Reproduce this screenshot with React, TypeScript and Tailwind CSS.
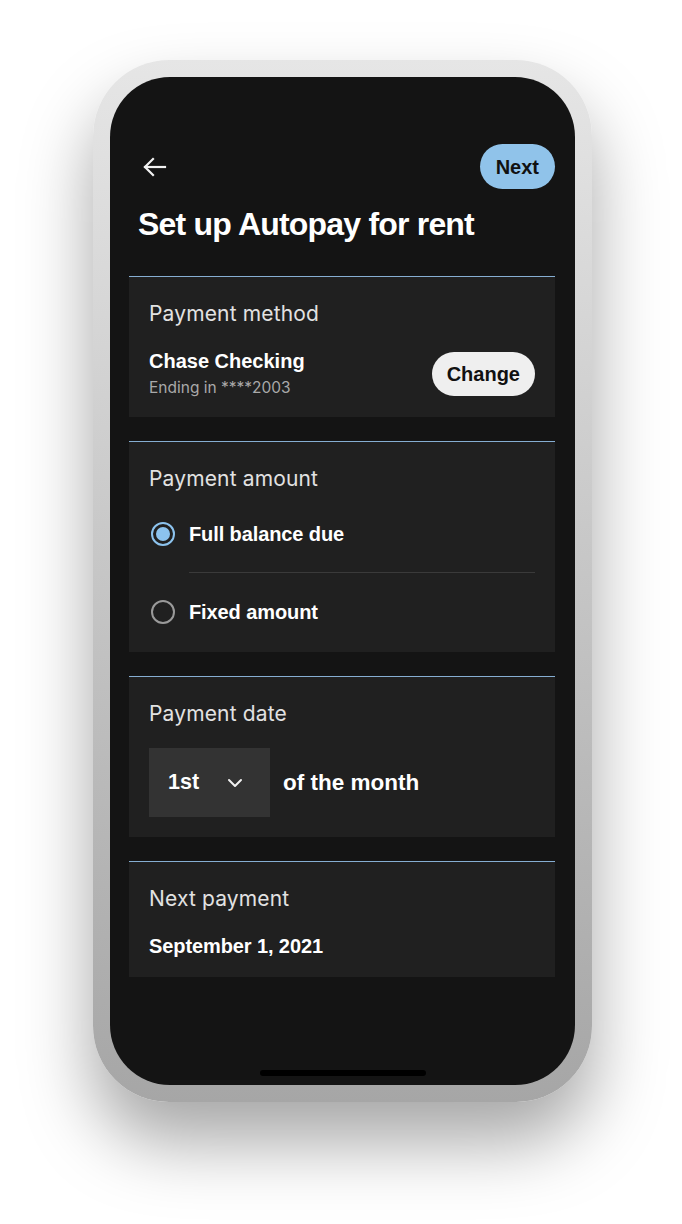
import React from "react";

const sans = { fontFamily: '"Liberation Sans", Arial, sans-serif' };
const inter = { fontFamily: 'Inter, "Liberation Sans", sans-serif' };

function Card({ label, children }: { label: string; children?: React.ReactNode }) {
  return (
    <div className="bg-[#202020] border-t border-[#86aed2] px-5 pt-[25px]">
      <div className="text-[21px] leading-[24px] text-[#e2e2e2] tracking-[0.15px]" style={inter}>
        {label}
      </div>
      {children}
    </div>
  );
}

function Radio({ checked }: { checked: boolean }) {
  return checked ? (
    <div className="ml-[2px] w-6 h-6 rounded-full border-2 border-[#8cc3ee] flex items-center justify-center">
      <div className="w-[14px] h-[14px] rounded-full bg-[#8cc3ee]" />
    </div>
  ) : (
    <div className="ml-[2px] w-6 h-6 rounded-full border-2 border-[#9a9a9a]" />
  );
}

export default function App() {
  return (
    <div className="w-[682px] h-[1224px] bg-white flex pl-[93px] pt-[60px]" style={sans}>
      <div className="w-[499px] h-[1042px] rounded-[76px] bg-gradient-to-b from-[#e6e6e6] to-[#a6a6a6] p-[17px] shadow-[0_40px_70px_rgba(0,0,0,0.35)]">
        <div className="w-full h-full rounded-[60px] bg-[#141414] flex flex-col pt-[67px] pb-[9px]">
          <div className="h-[45px] flex items-center justify-between pl-[32px] pr-[20px]">
            <svg width="26" height="20" viewBox="0 0 26 20" fill="none" stroke="#f2f2f2" strokeWidth="2.2" strokeLinecap="square">
              <path d="M3 10 H23" />
              <path d="M11 2 L3 10 L11 18" />
            </svg>
            <button className="h-[45px] px-[16px] rounded-full bg-[#90c3ea] text-[#111] text-[20px] font-bold">
              Next
            </button>
          </div>
          <h1 className="ml-[28px] mt-[15px] text-[32px] leading-[40px] font-bold text-white tracking-[-0.8px]">
            Set up Autopay for rent
          </h1>
          <div className="ml-[19px] mr-[20px] mt-[32px] flex flex-col gap-[24px]">
            <Card label="Payment method">
              <div className="flex items-center justify-between pt-[23px] pb-[19px]">
                <div>
                  <div className="text-[20px] leading-[24px] font-bold text-white">Chase Checking</div>
                  <div className="text-[15.5px] leading-[20px] text-[#a9a9a9] mt-[5px]" style={inter}>
                    Ending in ****2003
                  </div>
                </div>
                <button className="h-[44px] px-[15px] rounded-full bg-[#efefef] text-[#111] text-[20px] font-bold">
                  Change
                </button>
              </div>
            </Card>
            <Card label="Payment amount">
              <div className="pt-[23px] pb-[20px]">
                <div className="flex items-center gap-[14px] h-[40px]">
                  <Radio checked />
                  <span className="text-[20px] font-bold text-white tracking-[-0.1px]">Full balance due</span>
                </div>
                <div className="ml-[40px] mt-[18px] mb-[19px] h-px bg-[#3a3a3a]" />
                <div className="flex items-center gap-[14px] h-[40px]">
                  <Radio checked={false} />
                  <span className="text-[20px] font-bold text-white tracking-[-0.1px]">Fixed amount</span>
                </div>
              </div>
            </Card>
            <Card label="Payment date">
              <div className="flex items-center gap-[13px] pt-[22px] pb-[20px]">
                <div className="w-[121px] h-[69px] bg-[#333333] flex items-center justify-between pl-[19px] pr-[27px]">
                  <span className="text-[21.5px] font-bold text-white">1st</span>
                  <svg width="16" height="10" viewBox="0 0 16 10" fill="none" stroke="#f0f0f0" strokeWidth="2" strokeLinecap="round" strokeLinejoin="round">
                    <path d="M2 2 L8 8 L14 2" />
                  </svg>
                </div>
                <span className="text-[22.5px] font-bold text-white">of the month</span>
              </div>
            </Card>
            <Card label="Next payment">
              <div className="pt-[23px] pb-[19px] text-[20px] leading-[24px] font-bold text-white tracking-[-0.1px]">
                September 1, 2021
              </div>
            </Card>
          </div>
          <div className="mt-auto mx-auto w-[166px] h-[6px] rounded-full bg-black" />
        </div>
      </div>
    </div>
  );
}
